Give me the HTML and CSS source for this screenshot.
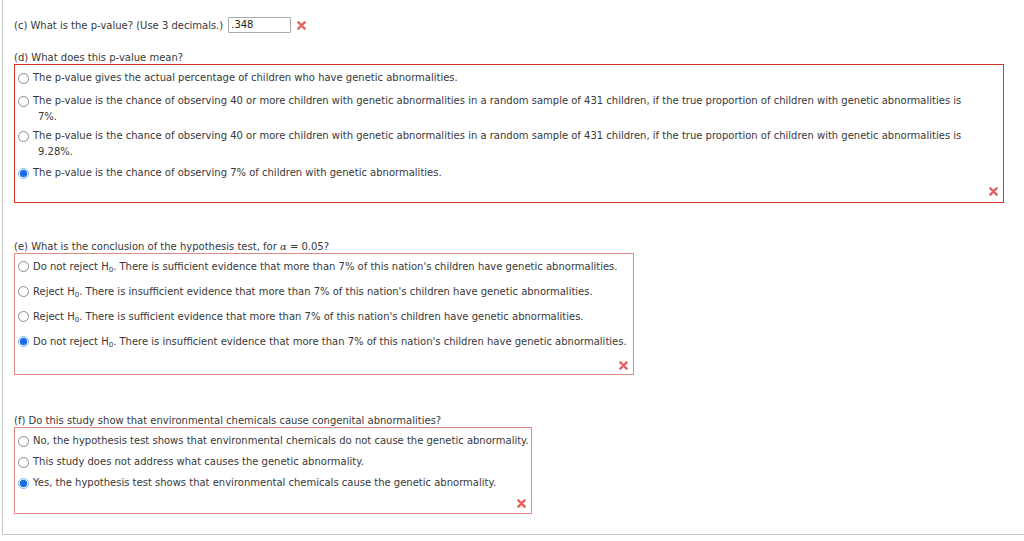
FILE: index.html
```html
<!DOCTYPE html>
<html>
<head>
<meta charset="utf-8">
<link rel="stylesheet" href="styles.css">
</head>
<body>
<div class="page">
  <div class="qrow">
    <span class="qtext">(c) What is the p-value? (Use 3 decimals.)</span>
    <span class="answer">.348</span>
    <svg class="xmark" viewBox="0 0 10 10"><path d="M1.5 1.5 L8.5 8.5 M8.5 1.5 L1.5 8.5"/></svg>
  </div>

  <div class="label label-d">(d) What does this p-value mean?</div>
  <div class="box box-d">
    <div class="opt o1"><span class="radio"></span><span class="otext">The p-value gives the actual percentage of children who have genetic abnormalities.</span></div>
    <div class="opt o2"><span class="radio"></span><span class="otext">The p-value is the chance of observing 40 or more children with genetic abnormalities in a random sample of 431 children, if the true proportion of children with genetic abnormalities is 7%.</span></div>
    <div class="opt o3"><span class="radio"></span><span class="otext">The p-value is the chance of observing 40 or more children with genetic abnormalities in a random sample of 431 children, if the true proportion of children with genetic abnormalities is 9.28%.</span></div>
    <div class="opt o4"><span class="radio on"></span><span class="otext">The p-value is the chance of observing 7% of children with genetic abnormalities.</span></div>
    <div class="xrow"><svg class="xmark" viewBox="0 0 10 10"><path d="M1.5 1.5 L8.5 8.5 M8.5 1.5 L1.5 8.5"/></svg></div>
  </div>

  <div class="label label-e">(e) What is the conclusion of the hypothesis test, for <i class="alpha">α</i> = 0.05?</div>
  <div class="box box-e">
    <div class="opt"><span class="radio"></span><span class="otext">Do not reject H<sub>0</sub>. There is sufficient evidence that more than 7% of this nation's children have genetic abnormalities.</span></div>
    <div class="opt"><span class="radio"></span><span class="otext">Reject H<sub>0</sub>. There is insufficient evidence that more than 7% of this nation's children have genetic abnormalities.</span></div>
    <div class="opt"><span class="radio"></span><span class="otext">Reject H<sub>0</sub>. There is sufficient evidence that more than 7% of this nation's children have genetic abnormalities.</span></div>
    <div class="opt"><span class="radio on"></span><span class="otext">Do not reject H<sub>0</sub>. There is insufficient evidence that more than 7% of this nation's children have genetic abnormalities.</span></div>
    <div class="xrow"><svg class="xmark" viewBox="0 0 10 10"><path d="M1.5 1.5 L8.5 8.5 M8.5 1.5 L1.5 8.5"/></svg></div>
  </div>

  <div class="label label-f">(f) Do this study show that environmental chemicals cause congenital abnormalities?</div>
  <div class="box box-f">
    <div class="opt"><span class="radio"></span><span class="otext">No, the hypothesis test shows that environmental chemicals do not cause the genetic abnormality.</span></div>
    <div class="opt"><span class="radio"></span><span class="otext">This study does not address what causes the genetic abnormality.</span></div>
    <div class="opt"><span class="radio on"></span><span class="otext">Yes, the hypothesis test shows that environmental chemicals cause the genetic abnormality.</span></div>
    <div class="xrow"><svg class="xmark" viewBox="0 0 10 10"><path d="M1.5 1.5 L8.5 8.5 M8.5 1.5 L1.5 8.5"/></svg></div>
  </div>
</div>
</body>
</html>
```

FILE: styles.css
```css
html, body {
  margin: 0;
  padding: 0;
  background: #fff;
}
body {
  font-family: "DejaVu Sans", Verdana, sans-serif;
  font-size: 10px;
  color: #383838;
}
.page {
  margin-left: 2px;
  border-left: 1px solid #c8c8c8;
  border-bottom: 1px solid #c8c8c8;
  padding: 17px 0 20px 11px;
  width: 1010px;
}
.qrow {
  display: flex;
  align-items: center;
  height: 16px;
}
.qtext {
  margin-right: 5px;
}
.answer {
  box-sizing: border-box;
  width: 63px;
  height: 16px;
  border: 1px solid #a9a9a9;
  border-radius: 1px;
  padding: 0 0 0 2px;
  line-height: 14px;
  color: #222;
}
.qrow .xmark {
  margin-left: 6px;
}
.xmark {
  width: 9px;
  height: 9px;
  display: block;
}
.xmark path {
  stroke: #e4605c;
  stroke-width: 2.6;
  stroke-linecap: round;
  fill: none;
}
.label {
  line-height: 13px;
  height: 13px;
}
.label-d { margin-top: 18px; }
.label-e { margin-top: 37px; }
.label-f { margin-top: 39px; }
.alpha { font-family: "DejaVu Serif", serif; font-size: 10px; }
.box {
  box-sizing: border-box;
  border: 1px solid #e08a86;
}
.box-d {
  width: 990px;
  border-color: #d8342c;
  height: 139px;
}
.box-e { width: 620px; height: 122px; }
.box-f { width: 518px; height: 87px; }
.opt {
  display: flex;
  align-items: flex-start;
  padding-left: 3px;
}
.radio {
  flex: none;
  box-sizing: border-box;
  width: 11px;
  height: 11px;
  border: 1px solid #8c8c8c;
  border-radius: 50%;
  background: #fff;
  margin-right: 4px;
}
.radio.on {
  border-color: #7fb0f0;
  background: radial-gradient(circle, #1a6fe0 0 3.2px, #5d9bef 3.6px, #ffffff 4.2px);
}
.otext {
  padding-left: 5px;
  text-indent: -5px;
}
.otext sub {
  font-size: 7px;
  vertical-align: -2px;
  line-height: 0;
}
.box-d .opt { line-height: 16px; }
.box-d .opt .radio { margin-top: 2.5px; }
.box-d .o1 { padding-top: 5px; }
.box-d .o2 { padding-top: 7px; }
.box-d .o3 { padding-top: 3px; }
.box-d .o4 { padding-top: 5px; }
.box-d .otext { padding-right: 30px; }
.box-e .opt { line-height: 17px; padding-top: 4px; padding-bottom: 4px; }
.box-e .opt .radio { margin-top: 3px; }
.box-f .opt { line-height: 16px; padding-top: 5px; padding-bottom: 0; }
.box-f .opt .radio { margin-top: 2.5px; }
.xrow {
  display: flex;
  justify-content: flex-end;
  padding-right: 5px;
}
.box-d .xrow { margin-top: 6px; }
.box-e .xrow { margin-top: 7px; }
.box-f .xrow { margin-top: 8px; }
```
